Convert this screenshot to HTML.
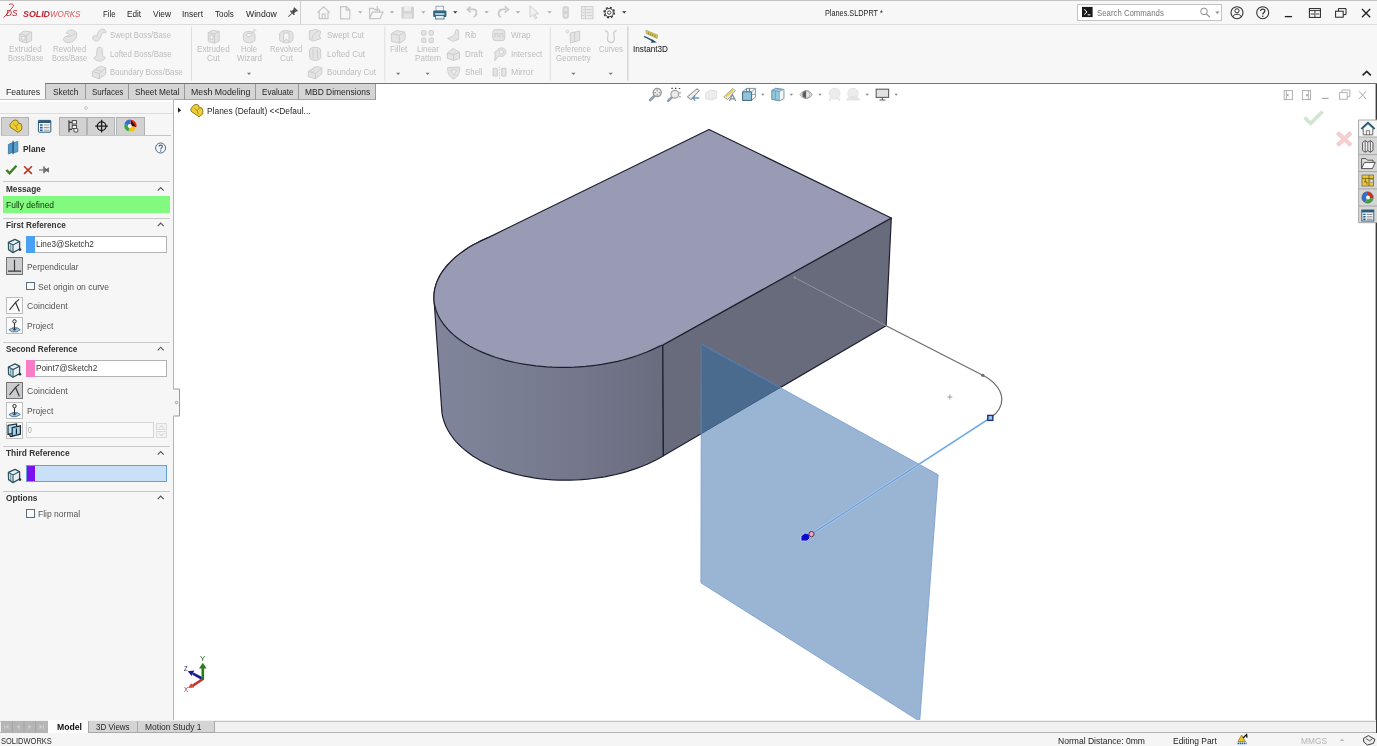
<!DOCTYPE html>
<html>
<head>
<meta charset="utf-8">
<title>Planes.SLDPRT</title>
<style>
html,body{margin:0;padding:0;}
body{width:1377px;height:746px;overflow:hidden;background:#fff;position:relative;font-family:"Liberation Sans",sans-serif;font-size:9px;color:#222;}
.abs{position:absolute;}
.t{position:absolute;white-space:nowrap;line-height:12px;font-size:8.8px;transform-origin:0 50%;}
#titlebar{left:0;top:0;width:1377px;height:24px;background:#f7f7f7;border-top:1px solid #c4c4c4;box-sizing:border-box;}
#ribbon{left:0;top:24px;width:1377px;height:60px;background:#f7f7f7;border-top:1px solid #dcdcdc;box-sizing:border-box;}
.menu{top:8px;font-size:9px;color:#1a1a1a;}
.dis{color:#b4b4b4;}
.rl{font-size:8.3px;color:#b9b9b9;line-height:9.5px;text-align:center;}
.vsep{position:absolute;width:1px;background:#dedede;}
.ts{position:absolute;top:84px;height:15.5px;width:1px;background:#9a9a9a;}
.tab{position:absolute;top:83px;height:16px;box-sizing:border-box;background:#d4d4d4;border:1px solid #9c9c9c;border-left:none;font-size:9.3px;color:#2a2a2a;text-align:center;line-height:15px;white-space:nowrap;}
.tab.first{border-left:1px solid #9c9c9c;}
.tab.act{background:#f7f7f7;border:none;color:#222;}
#left{left:0;top:99.5px;width:173px;height:620.5px;background:#f6f6f6;border-right:1px solid #b5b5b5;}
.sec{position:absolute;left:0;width:173px;font-weight:bold;font-size:8.6px;color:#333;}
.hl{position:absolute;left:3px;width:167px;height:1px;background:#c9c9c9;}
.lbl{font-size:8.6px;color:#444;}
.ibox{position:absolute;box-sizing:border-box;border:1px solid #9a9a9a;background:#fafafa;}
.pt{position:absolute;top:117.3px;height:17.7px;box-sizing:border-box;background:#d2d2d2;border:1px solid #b2b2b2;border-bottom:none;}
.bt{position:absolute;left:6.1px;width:16.9px;height:17.2px;box-sizing:border-box;background:#fbfbfb;border:1px solid #bdbdbd;}
.bt.on{background:#cacdd0;border-color:#747474;}
.cb{position:absolute;left:26.1px;width:8.7px;height:8.6px;box-sizing:border-box;background:#fbfbfb;border:1px solid #5b6d86;}
.chev{position:absolute;}
#bottomtabs{left:0;top:719px;width:1377px;height:14px;background:#f0f0f0;border-top:1px solid #c8c8c8;box-sizing:border-box;}
#status{left:0;top:733px;width:1377px;height:13px;background:#f5f5f5;border-top:1px solid #c2c2c2;box-sizing:border-box;}
</style>
</head>
<body>
<!--TITLEBAR-->
<div id="titlebar" class="abs"></div>
<!--RIBBON-->
<div id="ribbon" class="abs"></div>
<!--TOPI-->
<svg class="abs" style="left:0;top:0" width="1377" height="100" viewBox="0 0 1377 100">
<defs>
<g id="dd"><path d="M-2.1,-1 H2.1 L0,1.3 Z"/></g>
<g id="cube"><path d="M0,3.4 L5,1 L12,2.6 V10.4 L6.6,13 L0,11 Z" fill="#e2e2e2" stroke="#c9c9c9" stroke-width="0.9"/><path d="M0,3.4 L6.6,5.2 L12,2.6 M6.6,5.2 V13" fill="none" stroke="#c9c9c9" stroke-width="0.9"/></g>
</defs>
<!-- DS logo swoosh -->
<path d="M9.4,4.4 C12.6,3.2 14.6,4.6 12.8,7 C11,9.2 6.6,14.4 4,17.4" fill="none" stroke="#c4232d" stroke-width="0.9" stroke-linecap="round"/>
<!-- pin -->
<g transform="translate(292.3,12.8) rotate(45)" fill="#4a4a4a"><rect x="-2.6" y="-5.4" width="5.2" height="1.4"/><rect x="-1.7" y="-4.2" width="3.4" height="3.6"/><path d="M-3.2,-0.8 H3.2 L2.4,0.6 H-2.4 Z"/><rect x="-0.45" y="0.6" width="0.9" height="5"/></g>
<!-- separators -->
<rect x="300" y="1" width="1" height="23.5" fill="#cfcfcf"/>
<rect x="191" y="26.5" width="1" height="54" fill="#dedede"/><rect x="384.3" y="26.5" width="1" height="54" fill="#dedede"/><rect x="549.8" y="26.5" width="1" height="54" fill="#dedede"/><rect x="627.3" y="26.5" width="1.2" height="54" fill="#cdcdcd"/>
<!-- quick access (disabled grey) -->
<g fill="none" stroke="#c6c6c6" stroke-width="1.2">
<path d="M317.4,12.6 L323.6,6.8 L329.8,12.6 M319.2,11.4 V18.6 H328 V11.4 M322.2,18.4 V14.2 H325 V18.4"/>
<path d="M340.6,6.6 H346.4 L349.8,10 V18.8 H340.6 Z M346.2,6.8 V10.2 H349.6"/>
<path d="M369.6,18.6 V8.4 H373.4 L374.6,10 H379.6 V12 M369.6,18.6 L372.4,12.2 H383 L380,18.6 Z M377.2,6 V10.4 M375.4,8.6 L377.2,10.6 L379,8.6"/>
</g>
<rect x="401.4" y="6.8" width="12.6" height="12" rx="1" fill="#d2d2d2"/><rect x="404" y="6.8" width="7" height="4.4" fill="#ececec"/><rect x="403.6" y="13.4" width="8.2" height="5.4" fill="#e4e4e4"/>
<g fill="#a9a9a9"><use href="#dd" x="360.2" y="12.2"/><use href="#dd" x="392" y="12.2"/><use href="#dd" x="423.4" y="12.2"/><use href="#dd" x="486.6" y="12.2"/><use href="#dd" x="518" y="12.2"/><use href="#dd" x="549.6" y="12.2"/></g>
<g fill="#333"><use href="#dd" x="455.2" y="12.2"/><use href="#dd" x="624.2" y="12.2"/></g>
<!-- print -->
<rect x="436" y="6.2" width="7.6" height="5" fill="#f4f4f4" stroke="#8a9aa6" stroke-width="0.8"/>
<rect x="433.2" y="10.6" width="13.2" height="6.4" rx="1" fill="#2f6482"/><rect x="435.2" y="13.2" width="9.2" height="1.6" fill="#cfe0ea"/><rect x="435.6" y="15.6" width="8.4" height="3.4" fill="#e9eef2" stroke="#2f6482" stroke-width="0.8"/>
<!-- undo redo cursor -->
<g fill="none" stroke="#c9c9c9" stroke-width="1.7"><path d="M468.6,9.4 H473.4 C477.4,9.4 477.6,15.4 473.6,17 M470.6,6.6 L467.4,9.4 L470.6,12.4"/><path d="M506,9.4 H502.6 C498,9.4 497.4,15.4 500.8,17.2 M504.8,6.4 L508.4,9.4 L504.8,12.6"/></g>
<path d="M530,5.8 V17.2 L533,14.6 L535.2,18.8 L536.8,18 L534.8,14 L538.6,13.6 Z" fill="#f2f2f2" stroke="#c9c9c9" stroke-width="0.9"/>
<rect x="562.4" y="6" width="6.6" height="13" rx="3.2" fill="#d4d4d4"/><circle cx="565.7" cy="9.6" r="1.5" fill="#e8e8e8"/><circle cx="565.7" cy="15.2" r="1.5" fill="#e8e8e8"/>
<rect x="581.4" y="6.6" width="11.6" height="12.2" fill="#ececec" stroke="#cdcdcd" stroke-width="0.9"/><path d="M585.4,6.6 V18.8 M582.6,9.6 h1.8 M582.6,12.6 h1.8 M582.6,15.6 h1.8 M586.8,9.6 h5 M586.8,12.6 h5 M586.8,15.6 h5" stroke="#cdcdcd" stroke-width="0.9"/>
<!-- gear -->
<g transform="translate(609.2,12.6)"><circle r="5.1" fill="none" stroke="#3a3a3a" stroke-width="1.6" stroke-dasharray="2 2.005"/><circle r="4.1" fill="#f7f7f7" stroke="#3a3a3a" stroke-width="1"/><circle r="1.7" fill="none" stroke="#3a3a3a" stroke-width="0.9"/></g>
<!-- search box -->
<rect x="1077.5" y="4.5" width="144" height="16" fill="#fff" stroke="#c4c4c4" stroke-width="1"/>
<rect x="1082" y="6.9" width="10.6" height="10.2" fill="#1a1a1a"/><path d="M1084.2,9.4 L1087,12 L1084.2,14.6 M1087.6,14.8 H1090.4" fill="none" stroke="#fff" stroke-width="1"/>
<circle cx="1204" cy="11.4" r="3.3" fill="none" stroke="#8a8a8a" stroke-width="1"/><path d="M1206.4,13.8 L1209.8,17.2" stroke="#8a8a8a" stroke-width="1.2"/>
<use href="#dd" x="1217.4" y="12.6" fill="#8a8a8a"/>
<!-- user / help -->
<circle cx="1237" cy="12.7" r="6" fill="none" stroke="#333" stroke-width="1.1"/><circle cx="1237" cy="10.8" r="2.1" fill="none" stroke="#333" stroke-width="1"/><path d="M1232.8,16.8 C1233.6,13.4 1240.4,13.4 1241.2,16.8" fill="none" stroke="#333" stroke-width="1"/>
<circle cx="1262.7" cy="12.7" r="6" fill="none" stroke="#333" stroke-width="1.1"/><path d="M1260.6,11 C1260.6,8.4 1264.9,8.4 1264.9,11 C1264.9,12.6 1262.8,12.6 1262.8,14.4" fill="none" stroke="#333" stroke-width="1.2"/><circle cx="1262.8" cy="16.2" r="0.8" fill="#333"/>
<!-- window controls -->
<path d="M1284.8,16.6 H1292" stroke="#222" stroke-width="1.3"/>
<rect x="1309.4" y="8.6" width="11" height="8.8" fill="none" stroke="#222" stroke-width="1"/><path d="M1309.4,10.6 H1320.4 M1314.9,10.6 V17.4 M1310.6,14 h3.4 M1319.2,14 h-3.4" stroke="#222" stroke-width="0.9"/>
<path d="M1338.4,11 V8.6 H1346 V14.6 H1343.4" fill="none" stroke="#222" stroke-width="1"/><rect x="1335.6" y="11.2" width="7.6" height="6" fill="#f7f7f7" stroke="#222" stroke-width="1"/>
<path d="M1362,9 L1370.2,17.2 M1370.2,9 L1362,17.2" stroke="#222" stroke-width="1.3"/>
<path d="M1362.6,75.4 L1366.7,71.4 L1370.8,75.4" fill="none" stroke="#222" stroke-width="1.5"/>
<!-- ribbon dropdown arrows -->
<g fill="#7a7a7a"><use href="#dd" x="249" y="73.8"/><use href="#dd" x="398.2" y="73.8"/><use href="#dd" x="427.6" y="73.8"/><use href="#dd" x="573.4" y="73.8"/><use href="#dd" x="610.7" y="73.8"/></g>
<g fill="#e4e4e4" stroke="#cbcbcb" stroke-width="0.9" stroke-linejoin="round">
<!-- extruded boss -->
<path d="M19.4,34 L24,31 L31.6,32 V40.4 L26.6,43 L19.4,41 Z"/><path d="M19.4,34 L26.6,35.4 L31.6,32 M26.6,35.4 V43" fill="none"/><rect x="21.6" y="36.4" width="3.4" height="3.6" fill="#f2f2f2"/>
<!-- revolved boss -->
<path d="M66,33 C68,28.6 76.6,29 76.8,34.4 C77,39.6 71.6,43.6 66.4,42.4 C62.6,41.4 62.6,37 66,36.4 C69.2,35.8 70.6,34 66,33 Z"/><path d="M66,36.4 C69,37.6 73.4,35.4 75.6,32.6" fill="none"/>
<!-- swept boss -->
<path d="M92.6,37.6 C92.6,35.4 95.2,35 96.6,36.4 C97.8,32.6 99,29.2 102.6,29.2 C105.4,29.2 106.6,31.4 105.6,33 C104.2,32 102.2,32.6 101.4,35.2 C100.2,39.2 98.4,41.4 95.6,41 C93.6,40.6 92.6,39.2 92.6,37.6 Z"/>
<!-- lofted boss -->
<path d="M97.2,48.4 C97.2,46.8 102,46.8 102,48.4 L102.6,55.4 L105.4,57.8 C104.4,60.4 100.6,61.4 99.6,61.2 C97.6,61 94.4,59.8 93.8,57.8 L96.6,55.4 Z"/>
<!-- boundary boss -->
<path d="M92.4,71.6 L98,67.2 L101.4,66.4 L105.8,68 V74 L99.4,78.8 L92.4,76.4 Z"/><path d="M92.4,71.6 L99.4,73.6 L105.8,68 M99.4,73.6 V78.8 M95.4,69.4 L101.8,71.4" fill="none"/>
<!-- extruded cut -->
<path d="M208.2,32.6 L212.6,30.4 L219.2,31.4 V41 L214.6,43.2 L208.2,41.6 Z"/><path d="M208.2,32.6 L214.6,34 L219.2,31.4 M214.6,34 V43.2" fill="none"/><rect x="210" y="35" width="3" height="4.4" fill="#f4f4f4"/>
<!-- hole wizard -->
<path d="M243.4,34.6 C243.4,30.4 255,30.4 255,34.6 V39.6 C255,43.8 243.4,43.8 243.4,39.6 Z"/><ellipse cx="249.2" cy="35" rx="3" ry="1.6" fill="#f4f4f4"/><path d="M250.6,34 L255.4,29.6 M253.4,29 L256,31.6" fill="none"/>
<!-- revolved cut -->
<path d="M279.6,34 C279.6,29.4 293,29.4 293,34 V39.4 C293,44 279.6,44 279.6,39.4 Z"/><path d="M283.6,33 H289 V41.4 L286.4,39 L283.6,41.4 Z" fill="#f4f4f4"/>
<!-- swept cut -->
<path d="M309.4,31 L316,29.4 L320.8,31.4 L319.4,36.4 L321,38.4 L314,41 L309.4,39.6 Z"/><path d="M312,39.6 C312,36 314,32.6 318.4,31.4" fill="none"/>
<!-- lofted cut -->
<path d="M309.6,50 C309.6,46.4 320.6,46.4 320.6,50 V57.4 C320.6,61.4 309.6,61.4 309.6,57.4 Z"/><path d="M313,49.4 V58.6 M317.4,49.4 V58.6" fill="none"/>
<!-- boundary cut -->
<path d="M308.4,71.4 L314,67.4 L317.4,66.6 L321.8,68 V74 L315.4,78.8 L308.4,76.6 Z"/><path d="M308.4,71.4 L315.4,73.6 L321.8,68 M315.4,73.6 V78.8" fill="none"/><circle cx="312.6" cy="70.6" r="1.2" fill="#f4f4f4"/>
<!-- fillet -->
<path d="M391.4,33.6 L396.6,30.6 L404.6,32 C405.4,34 405.4,38 404.6,40 L399.4,43.2 L391.4,41.4 Z"/><path d="M391.4,33.6 L399.4,35.4 L404.6,32 M399.4,35.4 V43.2" fill="none"/>
<!-- linear pattern -->
<rect x="421.6" y="30.6" width="4.4" height="4.6" rx="1"/><rect x="429" y="30.6" width="4.4" height="4.6" rx="1"/><rect x="421.6" y="38" width="4.4" height="4.6" rx="1"/><rect x="429" y="38" width="4.4" height="4.6" rx="1"/>
<!-- rib draft shell -->
<path d="M447.6,38.4 L452,36.6 C455,35.4 455.6,31.4 456,29.6 L458.6,30.4 V39.4 L452.6,41.4 Z"/>
<path d="M447.4,53 L453,48.4 L459.6,52.4 V58.6 L453.6,60.4 L447.4,58.4 Z"/><path d="M447.4,53 L453.6,54.6 L459.6,52.4 M453.6,54.6 V60.4" fill="none"/>
<path d="M447.6,67.6 L459.6,67 C460,73 457.4,77.4 453.4,79 C449.6,77.4 447.4,73 447.6,67.6 Z"/><path d="M451,70 L456.6,70 L454,75.6 Z" fill="#f4f4f4"/>
<!-- wrap intersect mirror -->
<rect x="492.8" y="29.6" width="12" height="11" rx="2.6"/><path d="M495,37.4 V33.6 H498 V37.4 M500,37.4 V33.6 H503 V37.4" fill="none"/>
<path d="M497,50.6 C499,46.4 506,47.4 506,52 C506,56 501,57.4 498.6,56 L494.6,61 L495.4,55 C493.6,53.4 495,51 497,50.6 Z"/><circle cx="501.4" cy="52" r="2.2" fill="#f4f4f4"/>
<path d="M493,68.4 H497.4 V76 H493 Z M501.6,68.4 H506 V76 H501.6 Z"/><path d="M499.5,66.4 V79" fill="none" stroke-dasharray="1.6 1.2"/>
<!-- ref geometry -->
<path d="M570.4,33 L579.6,31 V40.4 L570.4,43 Z"/><circle cx="567.4" cy="31.6" r="1.3" fill="none"/><path d="M574.6,32 V42" fill="none"/>
<!-- curves -->
<path d="M605,30.6 C611,31 606,38.4 608,41 C610,43.4 613,43 614,40.6 C615.6,37 611,31.6 616.6,30.4" fill="none" stroke-width="1.2"/>
</g>
<!-- instant3D -->
<path d="M645.9,30.2 L657.6,35 L657.2,38.5 L646.1,33.4 Z" fill="#d6c556" stroke="#a8983a" stroke-width="0.6"/>
<path d="M648.4,32.4 v1.8 M650.6,33.3 v1.8 M652.8,34.2 v1.8 M655,35.2 v1.8" stroke="#7d6f24" stroke-width="0.7"/>
<path d="M644.1,36.3 L653.4,41" stroke="#2d5f76" stroke-width="1.5"/><path d="M652.3,39.4 L657,42.6 L650.8,42.7 Z" fill="#264f66"/>
</svg>
<!--/TOPI-->
<!--TABS-->
<div class="abs" style="left:45px;top:82.8px;width:1332px;height:1.3px;background:#757575"></div>
<div class="abs" style="left:0;top:84px;width:45px;height:15.5px;background:#f7f7f7"></div>
<div class="abs" style="left:45px;top:84px;width:331px;height:15.5px;background:#d5d5d5;border-bottom:1px solid #a6a6a6;box-sizing:border-box"></div>
<div class="ts" style="left:45px"></div><div class="ts" style="left:85px"></div><div class="ts" style="left:127.8px"></div><div class="ts" style="left:184.2px"></div><div class="ts" style="left:255px"></div><div class="ts" style="left:298.1px"></div><div class="ts" style="left:375.3px"></div>
<!--/TABS-->
<!--LEFT-->
<div id="left" class="abs"></div>
<!--LEFTC-->
<div class="abs" style="left:0;top:99.4px;width:173.5px;height:1px;background:#c4c4c4"></div><div class="abs" style="left:0;top:100.4px;width:173px;height:1.2px;background:#fdfdfd"></div>
<div class="abs" style="left:0;top:113px;width:173px;height:1px;background:#dedede"></div>
<svg class="abs" style="left:83px;top:105px" width="6" height="6"><circle cx="3" cy="3" r="1.4" fill="none" stroke="#b5b5b5" stroke-width="0.7"/></svg>
<div class="abs" style="left:1px;top:135px;width:170px;height:1px;background:#c4c4c4"></div>
<div class="pt" style="left:1.2px;width:28.1px"></div>
<div class="pt" style="left:29.3px;width:29.3px;background:#f3f3f3;height:18.6px;border-color:#f3f3f3"></div>
<div class="pt" style="left:58.6px;width:28.8px"></div>
<div class="pt" style="left:87.4px;width:28.1px"></div>
<div class="pt" style="left:115.5px;width:29.2px"></div>
<!-- section lines -->
<div class="hl" style="top:181px"></div>
<div class="hl" style="top:217.5px"></div>
<div class="hl" style="top:341.7px"></div>
<div class="hl" style="top:446px"></div>
<div class="hl" style="top:490.7px"></div>
<!-- message -->
<div class="abs" style="left:3px;top:196px;width:167px;height:16.7px;background:#82fa7f"></div>
<!-- inputs -->
<div class="ibox" style="left:26.1px;top:236.1px;width:140.9px;height:16.6px;background:#fff;border-color:#b2b2b2"><div style="position:absolute;left:-1px;top:-1px;width:9.2px;height:16.6px;background:#4aa0f2"></div></div>
<div class="ibox" style="left:26.1px;top:360.3px;width:140.9px;height:17px;background:#fff;border-color:#b2b2b2"><div style="position:absolute;left:-1px;top:-1px;width:9.2px;height:17px;background:#f87cc6"></div></div>
<div class="ibox" style="left:26.1px;top:464.9px;width:140.9px;height:16.9px;background:#c9e1f8;border-color:#5fa2d8"><div style="position:absolute;left:0;top:0;width:8.2px;height:100%;background:#7a12f0"></div></div>
<div class="ibox" style="left:26.1px;top:422px;width:127.6px;height:16.2px;background:#f9f9f9;border-color:#d6d6d6"></div>
<div class="ibox" style="left:156px;top:423px;width:11px;height:7px;background:#f2f2f2;border-color:#dcdcdc"></div>
<div class="ibox" style="left:156px;top:431px;width:11px;height:7px;background:#f2f2f2;border-color:#dcdcdc"></div>
<!-- buttons -->
<div class="bt on" style="top:257.4px"></div>
<div class="bt" style="top:296.6px"></div>
<div class="bt" style="top:316.8px"></div>
<div class="bt on" style="top:381.7px"></div>
<div class="bt" style="top:401.6px"></div>
<div class="bt" style="top:421.6px"></div>
<!-- checkboxes -->
<div class="cb" style="top:281.8px"></div>
<div class="cb" style="top:509.1px"></div>
<!-- splitter handle -->
<svg class="abs" style="left:170px;top:386px" width="12" height="34"><path d="M3.5,3 H9.5 V30 H3.5" fill="#f6f6f6" stroke="#9a9a9a" stroke-width="1"/><rect x="2.6" y="3.6" width="1.6" height="25.8" fill="#f6f6f6"/><circle cx="6.5" cy="16.5" r="1.3" fill="none" stroke="#8a8a8a" stroke-width="0.7"/></svg>
<!--LI-->
<svg class="abs" style="left:0;top:100px" width="182" height="440" viewBox="0 100 182 440">
<defs>
<g id="part"><path d="M0.1,4.4 L3.1,0.8 L5.4,0 L7.6,0.6 L8.6,3.2 L11,3.6 L12.1,6.2 L11.9,9.6 L8.2,12.4 L0.4,7 Z" fill="#f1cd35" stroke="#8c7a1c" stroke-width="1" stroke-linejoin="round"/><path d="M3.4,3.8 L6.4,6.4 L8.8,3.4 M6.4,6.4 L7.6,10" fill="none" stroke="#a58d22" stroke-width="0.9"/></g>
<g id="chev"><path d="M-3,1.6 L0,-1.5 L3,1.6" fill="none" stroke="#555" stroke-width="1.1"/></g>
<g id="selcube"><path d="M0.8,4 L7.4,0.9 L12,3.2 V10.6 L5.4,14.2 L1,11.2 Z" fill="#e9f0f4" stroke="#2f5560" stroke-width="1.3" stroke-linejoin="round"/><path d="M0.8,4 L5.4,6.6 L12,3.2 M5.4,6.6 V14.2" fill="none" stroke="#2f5560" stroke-width="1.1"/><path d="M3.2,5.6 V12.6" stroke="#4a7a88" stroke-width="0.9"/><circle cx="12.4" cy="11.2" r="1.3" fill="#25343c"/></g>
<g id="coinc"><path d="M-4.6,4 L1.2,-3.2 L4.8,5.4 M1.2,-3.2 L4.4,-6" fill="none" stroke="#3a3a3a" stroke-width="1.2" stroke-linecap="round"/></g>
<g id="proj"><path d="M-5.6,4.2 L-2,2.2 H3 L5.8,4.2 L2,6.2 H-2.6 Z" fill="#9cc7e6" stroke="#3a6f95" stroke-width="0.8"/><path d="M0,-2.6 V4.4" stroke="#333" stroke-width="1.1"/><circle cx="0" cy="-4.3" r="1.7" fill="#f2f2f2" stroke="#333" stroke-width="1"/><path d="M-1.8,2.8 L0,4.8 L1.8,2.8" fill="none" stroke="#333" stroke-width="0.9"/></g>
</defs>
<!-- panel tab icons -->
<use href="#part" x="9.8" y="120"/>
<rect x="38.4" y="120.4" width="12.4" height="11.8" rx="0.8" fill="#f4f6f8" stroke="#2b5b7a" stroke-width="1"/>
<rect x="38.4" y="120.4" width="12.4" height="2.6" fill="#2b5b7a"/>
<path d="M40,125 h2.6 M40,127.6 h2.6 M40,130.2 h2.6" stroke="#1f5f94" stroke-width="1.6"/>
<path d="M43.8,125 h5.6 M43.8,127.6 h5.6 M43.8,130.2 h5.6" stroke="#9a9a9a" stroke-width="1.1"/>
<path d="M69,120.2 V132.2 M69,122.4 H72 M69,129.4 H72" fill="none" stroke="#3a3a3a" stroke-width="1.2"/>
<rect x="72.2" y="120.6" width="4.2" height="3.4" fill="#f5f5f5" stroke="#3a3a3a" stroke-width="0.9"/>
<rect x="72.2" y="125.4" width="4.2" height="3.2" fill="#f5f5f5" stroke="#3a3a3a" stroke-width="0.9"/>
<rect x="74" y="128.6" width="3.8" height="3.4" rx="0.8" fill="#fff" stroke="#3a3a3a" stroke-width="0.9"/>
<circle cx="101.6" cy="126.2" r="4.3" fill="none" stroke="#1c1c1c" stroke-width="1.3"/>
<path d="M95.2,126.2 H108 M101.6,119.8 V132.6" stroke="#1c1c1c" stroke-width="1.3"/>
<g transform="translate(130.4,125.6)"><circle r="6.2" fill="#fff"/>
<path d="M0,0 L0,-6.2 A6.2,6.2 0 0 1 5.9,2 Z" fill="#d8281c"/>
<path d="M0,0 L5.9,2 A6.2,6.2 0 0 1 -2,5.9 Z" fill="#f2c21a"/>
<path d="M0,0 L-2,5.9 A6.2,6.2 0 0 1 -6.1,-1 Z" fill="#3aa63a"/>
<path d="M0,0 L-6.1,-1 A6.2,6.2 0 0 1 0,-6.2 Z" fill="#2f6fd0"/>
<path d="M0.4,-5.6 L5.4,1 L0.8,0.4 Z" fill="#1a1a1a"/>
<circle r="2.1" cx="-0.6" cy="0.4" fill="#f4f4f4"/></g>
<!-- plane icon -->
<path d="M8.4,144.4 L12.6,142.6 V152.4 L8.4,154 Z" fill="#4e97c6" stroke="#2d6a94" stroke-width="0.7"/>
<path d="M13.6,142.8 L17.8,141.4 V151.6 L13.6,152.8 Z" fill="#5aa3d0" stroke="#2d6a94" stroke-width="0.7"/>
<path d="M13.1,140.8 V154.2" stroke="#1f4f74" stroke-width="1.1"/>
<!-- help -->
<circle cx="160.6" cy="148" r="5" fill="#f7f7f7" stroke="#4a6c8c" stroke-width="1"/>
<path d="M158.9,146.6 C158.9,144.6 162.4,144.6 162.4,146.6 C162.4,147.9 160.7,147.9 160.7,149.4" fill="none" stroke="#3a5c7c" stroke-width="1.1"/><circle cx="160.7" cy="151" r="0.7" fill="#3a5c7c"/>
<!-- ok cancel pin -->
<path d="M6.4,170 L9.6,173.2 L16.4,165.8" fill="none" stroke="#3a7f24" stroke-width="2.4"/>
<path d="M24.1,166.2 L31.9,173.9 M31.9,166.2 L24.1,173.9" stroke="#b8331a" stroke-width="1.5"/>
<path d="M39,170 H43.6" stroke="#666" stroke-width="1.1"/><rect x="43.2" y="166.4" width="1.5" height="6.8" fill="#666"/><path d="M44.6,167.6 L46.6,169 L48.9,167.3 V172.7 L46.6,171 L44.6,172.4 Z" fill="#666"/>
<!-- chevrons -->
<use href="#chev" x="160.7" y="189"/><use href="#chev" x="160.7" y="224.6"/><use href="#chev" x="160.7" y="348.7"/><use href="#chev" x="160.7" y="453.1"/><use href="#chev" x="160.7" y="497.6"/>
<!-- select cubes -->
<use href="#selcube" x="7.6" y="238.4"/><use href="#selcube" x="7.6" y="363"/><use href="#selcube" x="7.6" y="468.4"/>
<!-- perpendicular -->
<path d="M14.5,259.8 V271.2 M8,271.2 H21.2" stroke="#3a3a3a" stroke-width="1.2"/>
<use href="#coinc" x="14.4" y="305.6"/><use href="#coinc" x="14.4" y="390.6"/>
<use href="#proj" x="14.5" y="325.6"/><use href="#proj" x="14.5" y="410.4"/>
<!-- offset icon -->
<path d="M8,425.4 L16.6,424 V432.6 L8,434.4 Z" fill="#b4def2" stroke="#1f2d38" stroke-width="1.2"/>
<path d="M12.2,427.6 L20.4,425.8 V434.2 L12.2,436.2 Z" fill="#9fd3ee" stroke="#1f2d38" stroke-width="1.2"/>
<path d="M16.4,428.6 V434 M10,434.4 V436.6 M10,436.4 H12.4" stroke="#10181e" stroke-width="1.1" fill="none"/>
<!-- spinner arrows -->
<path d="M159.4,427.8 L161.5,425.4 L163.6,427.8 M159.4,433.4 L161.5,435.8 L163.6,433.4" fill="none" stroke="#c6c6c6" stroke-width="0.8"/>
</svg>
<!--/LI-->
<!--/LEFTC-->
<!--VIEWPORT-->
<svg class="abs" style="left:0;top:0" width="1377" height="746" viewBox="0 0 1377 746">
<defs><linearGradient id="cg" gradientUnits="userSpaceOnUse" x1="434" y1="0" x2="663" y2="0"><stop offset="0" stop-color="#81859b"/><stop offset="0.35" stop-color="#7a7e93"/><stop offset="0.65" stop-color="#74778b"/><stop offset="0.85" stop-color="#6e7184"/><stop offset="1" stop-color="#696c7d"/></linearGradient></defs>
<polygon points="433.9,297.8 434.0,294.8 434.3,291.8 434.8,288.8 435.6,285.8 436.6,282.8 437.8,279.8 439.2,276.9 440.8,274.0 442.7,271.1 444.8,268.3 447.1,265.5 449.6,262.8 452.3,260.1 455.2,257.4 458.3,254.9 461.6,252.4 465.0,250.0 468.6,247.6 472.4,245.3 476.4,243.2 480.5,241.1 484.8,239.1 489.2,237.2 662.8,345.0 663.4,455.8 661.0,457.3 656.5,459.7 651.9,462.0 647.2,464.2 642.2,466.2 637.2,468.1 632.0,469.9 626.8,471.6 621.4,473.1 615.9,474.5 610.3,475.7 604.7,476.8 599.0,477.7 593.2,478.5 587.4,479.2 581.6,479.6 575.8,480.0 569.9,480.2 564.1,480.2 558.3,480.1 552.5,479.8 546.7,479.4 541.0,478.8 535.4,478.1 529.9,477.2 524.4,476.2 519.0,475.0 513.7,473.7 508.6,472.2 503.6,470.6 498.7,468.9 493.9,467.0 489.4,465.0 484.9,462.9 480.7,460.7 476.6,458.3 472.8,455.9 469.1,453.3 465.6,450.6 462.4,447.9 459.3,445.0 456.5,442.1 453.9,439.1 451.6,436.0 449.5,432.8 447.6,429.6 446.0,426.4 444.6,423.0 443.5,419.7 442.6,416.3 442.0,412.9 441.7,409.4 434.1,300.8" fill="url(#cg)" stroke="#1d2030" stroke-width="1.2" stroke-linejoin="round"/>
<polygon points="662.8,345.0 891.3,218.0 886.1,325.8 663.4,455.8" fill="#686b7b" stroke="#1d2030" stroke-width="1.2" stroke-linejoin="round"/>
<polygon points="709.0,129.5 891.3,218.0 662.8,345.0 659.7,346.1 655.5,348.1 651.2,350.1 646.8,352.0 642.2,353.8 637.5,355.5 632.7,357.1 627.8,358.6 622.8,360.0 617.6,361.3 612.4,362.4 607.2,363.4 601.8,364.4 596.4,365.2 591.0,365.8 585.5,366.4 580.0,366.8 574.4,367.2 568.9,367.3 563.3,367.4 557.8,367.3 552.3,367.2 546.8,366.9 541.3,366.4 535.9,365.9 530.6,365.2 525.3,364.4 520.1,363.5 514.9,362.5 509.9,361.3 504.9,360.1 500.1,358.7 495.4,357.2 490.8,355.6 486.3,353.9 482.0,352.1 477.8,350.2 473.8,348.3 469.9,346.2 466.2,344.0 462.7,341.8 459.4,339.4 456.2,337.0 453.3,334.6 450.5,332.0 447.9,329.4 445.6,326.7 443.4,324.0 441.5,321.2 439.7,318.4 438.2,315.5 436.9,312.6 435.9,309.7 435.0,306.8 434.4,303.8 434.0,300.8 433.9,297.8 434.0,294.8 434.3,291.8 434.8,288.8 435.6,285.8 436.5,282.8 437.8,279.8 439.2,276.9 440.8,274.0 442.7,271.1 444.8,268.3 447.1,265.5 449.6,262.8 452.3,260.1 455.2,257.4 458.3,254.9 461.5,252.4 465.0,250.0 468.6,247.6 472.4,245.3 476.4,243.2 480.5,241.1 484.8,239.1 489.2,237.1 709.0,129.5" fill="#989bb3" stroke="#1d2030" stroke-width="1.2" stroke-linejoin="round"/>
<line x1="794.7" y1="277.5" x2="886.1" y2="325.8" stroke="#8f9098" stroke-width="1"/>
<circle cx="794.7" cy="277.5" r="1.3" fill="#8f9098"/>
<path d="M886.1,325.8 L982.8,375.3 C993,380.5 1001.5,389 1001.8,399 C1002,407 997.5,413 990.8,417.5" fill="none" stroke="#6b6b6b" stroke-width="1.2"/>
<circle cx="982.8" cy="375.3" r="1.6" fill="#6b6b6b"/>
<path d="M947.4,397 h5 M949.9,394.5 v5" stroke="#8a8a8a" stroke-width="0.8" fill="none"/>
<clipPath id="sc"><polygon points="433.9,297.8 434.0,294.8 434.3,291.8 434.8,288.8 435.6,285.8 436.6,282.8 437.8,279.8 439.2,276.9 440.8,274.0 442.7,271.1 444.8,268.3 447.1,265.5 449.6,262.8 452.3,260.1 455.2,257.4 458.3,254.9 461.6,252.4 465.0,250.0 468.6,247.6 472.4,245.3 476.4,243.2 480.5,241.1 484.8,239.1 489.2,237.2 662.8,345.0 663.4,455.8 661.0,457.3 656.5,459.7 651.9,462.0 647.2,464.2 642.2,466.2 637.2,468.1 632.0,469.9 626.8,471.6 621.4,473.1 615.9,474.5 610.3,475.7 604.7,476.8 599.0,477.7 593.2,478.5 587.4,479.2 581.6,479.6 575.8,480.0 569.9,480.2 564.1,480.2 558.3,480.1 552.5,479.8 546.7,479.4 541.0,478.8 535.4,478.1 529.9,477.2 524.4,476.2 519.0,475.0 513.7,473.7 508.6,472.2 503.6,470.6 498.7,468.9 493.9,467.0 489.4,465.0 484.9,462.9 480.7,460.7 476.6,458.3 472.8,455.9 469.1,453.3 465.6,450.6 462.4,447.9 459.3,445.0 456.5,442.1 453.9,439.1 451.6,436.0 449.5,432.8 447.6,429.6 446.0,426.4 444.6,423.0 443.5,419.7 442.6,416.3 442.0,412.9 441.7,409.4 434.1,300.8"/><polygon points="662.8,345.0 891.3,218.0 886.1,325.8 663.4,455.8"/><polygon points="709.0,129.5 891.3,218.0 662.8,345.0 659.7,346.1 655.5,348.1 651.2,350.1 646.8,352.0 642.2,353.8 637.5,355.5 632.7,357.1 627.8,358.6 622.8,360.0 617.6,361.3 612.4,362.4 607.2,363.4 601.8,364.4 596.4,365.2 591.0,365.8 585.5,366.4 580.0,366.8 574.4,367.2 568.9,367.3 563.3,367.4 557.8,367.3 552.3,367.2 546.8,366.9 541.3,366.4 535.9,365.9 530.6,365.2 525.3,364.4 520.1,363.5 514.9,362.5 509.9,361.3 504.9,360.1 500.1,358.7 495.4,357.2 490.8,355.6 486.3,353.9 482.0,352.1 477.8,350.2 473.8,348.3 469.9,346.2 466.2,344.0 462.7,341.8 459.4,339.4 456.2,337.0 453.3,334.6 450.5,332.0 447.9,329.4 445.6,326.7 443.4,324.0 441.5,321.2 439.7,318.4 438.2,315.5 436.9,312.6 435.9,309.7 435.0,306.8 434.4,303.8 434.0,300.8 433.9,297.8 434.0,294.8 434.3,291.8 434.8,288.8 435.6,285.8 436.5,282.8 437.8,279.8 439.2,276.9 440.8,274.0 442.7,271.1 444.8,268.3 447.1,265.5 449.6,262.8 452.3,260.1 455.2,257.4 458.3,254.9 461.5,252.4 465.0,250.0 468.6,247.6 472.4,245.3 476.4,243.2 480.5,241.1 484.8,239.1 489.2,237.1 709.0,129.5"/></clipPath>
<polygon points="701.4,344.2 938.2,474.8 919.7,721.3 700.9,582.8" fill="#9ab4d4"/>
<polygon points="701.4,344.2 938.2,474.8 919.7,721.3 700.9,582.8" fill="#4b6b8e" clip-path="url(#sc)"/>
<polygon points="701.4,344.2 938.2,474.8 919.7,721.3 700.9,582.8" fill="none" stroke="#7ea3d2" stroke-width="0.9"/>
<polygon points="701.4,344.2 938.2,474.8 919.7,721.3 700.9,582.8" fill="none" stroke="#4672a8" stroke-width="1" clip-path="url(#sc)"/>
<line x1="701.4" y1="433.6" x2="780.1" y2="387.6" stroke="#3c5e86" stroke-width="1"/>
<line x1="990.3" y1="417.9" x2="811.5" y2="534.1" stroke="#d4e8fa" stroke-opacity="0.45" stroke-width="2.6"/>
<line x1="990.3" y1="417.9" x2="811.5" y2="534.1" stroke="#6aa3e2" stroke-width="1.3"/>
<rect x="987.8" y="415.4" width="5" height="5" fill="#9fc0ee" stroke="#17357a" stroke-width="1.4"/>
<path d="M801,536 l4,-3 l4,1 l1,4 l-3,3 l-6,0 z" fill="#0a0ad0" stroke="#c7d3f5" stroke-width="0.8"/>
<circle cx="811.5" cy="534.1" r="2.6" fill="#f4a3c4" stroke="#4a2a3a" stroke-width="0.9"/>
</svg>
<!--/VIEWPORT-->
<!--VC-->
<svg class="abs" style="left:174px;top:84px" width="1203" height="640" viewBox="174 84 1203 640">
<defs><g id="dd2"><path d="M-1.8,-0.9 H1.8 L0,1.1 Z"/></g></defs>
<!-- right border -->
<rect x="1375.6" y="84" width="1.4" height="640" fill="#3c3c3c"/>
<!-- tree item -->
<path d="M178,107.6 L181.2,110.2 L178,112.8 Z" fill="#222"/>
<use href="#part" x="190.8" y="104.4"/>
<!-- heads-up toolbar -->
<g stroke-linecap="round">
<path d="M654.6,95.8 L650,100.2" stroke="#8c9fae" stroke-width="2.6"/><circle cx="657.2" cy="92.6" r="4" fill="#f2f2f2" stroke="#9a9a9a" stroke-width="1.5"/><path d="M657.2,89.8 v1.6 M657.2,93.8 v1.6 M654.4,92.6 h1.6 M658.4,92.6 h1.6" stroke="#9a9a9a" stroke-width="1.3" stroke-linecap="butt"/>
<path d="M671.8,97.4 L668.2,100.8" stroke="#8c9fae" stroke-width="2.6"/><circle cx="674.8" cy="94.2" r="3.9" fill="#e9ecec" stroke="#a4a4a4" stroke-width="1.3"/><path d="M671.4,88.4 h1.4 M675,88.4 h1.4 M678.8,88.5 h1.4" stroke="#3a3a3a" stroke-width="1.2" stroke-linecap="butt"/><path d="M680,92 v1.4 M680,96 v1.4" stroke="#8a8a8a" stroke-width="1.2" stroke-linecap="butt"/>
<path d="M687.4,96.8 L696.8,88.8 L699.2,90.6 L691,99.6 Z" fill="#f1f1f1" stroke="#9c9c9c" stroke-width="1.1" stroke-linejoin="round"/><path d="M692.6,98 H698.8 M694.8,96 L692.4,98 L694.8,100.2" fill="none" stroke="#6a98b8" stroke-width="1.3"/>
</g>
<path d="M705.6,93 L710,90 L716.6,91 V98 L711.6,100.2 L705.6,98.6 Z" fill="#ececec" stroke="#dcdcdc" stroke-width="0.8"/>
<path d="M723.8,96.8 L732.6,88.6 L735.4,90.6 L727.6,99.6 Z" fill="#f0f0f0" stroke="#a2a2a2" stroke-width="1" stroke-linejoin="round"/><path d="M726.6,96 L732.6,90.6" stroke="#ecd04a" stroke-width="2.2" stroke-linecap="round"/><path d="M729.4,101 L732.4,94.6 L735.8,101 M730.6,98.8 h3.8" fill="none" stroke="#7d8f9c" stroke-width="1.2"/>
<path d="M742.6,91.8 L746.4,88.4 H755.4 V97.2 L751.6,100.4 H742.6 Z" fill="#f6f8f9" stroke="#7d8a92" stroke-width="0.9" stroke-linejoin="round"/><path d="M742.6,91.8 H751.6 V100.4 H742.6 Z" fill="#8fc4e0" stroke="#466a80" stroke-width="1"/><path d="M746.6,88.6 V91.6 M749.4,88.6 V91.6" stroke="#466a80" stroke-width="0.9"/><path d="M751.6,94.4 H755.2 M751.6,91.8 L755.4,88.4" fill="none" stroke="#7d8a92" stroke-width="0.8"/>
<path d="M771.8,90.4 L775.6,88.2 L783.8,89.4 V98.6 L779.4,100.8 L771.8,99.4 Z" fill="#93c8e0" stroke="#5f879e" stroke-width="0.9" stroke-linejoin="round"/><path d="M779.4,91.6 L783.8,89.4 V98.6 L779.4,100.8 Z" fill="#f4f7f8" stroke="#8a9aa4" stroke-width="0.7"/><path d="M771.8,90.4 L779.4,91.6 M775.4,91 V100" stroke="#6f98ae" stroke-width="0.7"/>
<path d="M800,94.6 C803,89.4 809.4,89.4 812.2,94.6 C809.4,99.6 803,99.6 800,94.6 Z" fill="#e9e9e9" stroke="#9a9a9a" stroke-width="0.9"/><path d="M806.1,90.8 A3.8,3.8 0 0 0 806.1,98.4 Z" fill="#5c5c5c"/><circle cx="806.1" cy="94.6" r="3.8" fill="none" stroke="#9a9a9a" stroke-width="0.7"/>
<circle cx="834.6" cy="93.6" r="5.4" fill="#ececec" stroke="#dedede" stroke-width="0.8"/><path d="M831,98 L829,101 M838,98 L840,101" stroke="#e0e0e0" stroke-width="1.4"/>
<circle cx="853" cy="93.4" r="5.2" fill="#ececec" stroke="#dedede" stroke-width="0.8"/><path d="M846.4,100 H860 L857,96.8 H849.4 Z" fill="#e6e6e6" stroke="#dcdcdc" stroke-width="0.7"/>
<rect x="876.2" y="89.2" width="12.4" height="8.2" fill="#e2e2e2" stroke="#5e5e5e" stroke-width="1.1"/><path d="M882.4,97.6 V99.8 M879.4,100 H885.4" stroke="#5e5e5e" stroke-width="1.1"/>
<g fill="#8a8a8a"><use href="#dd2" x="762.8" y="94.6"/><use href="#dd2" x="791.3" y="94.6"/><use href="#dd2" x="820" y="94.6"/><use href="#dd2" x="867.2" y="94.6"/><use href="#dd2" x="896.2" y="94.6"/></g>
<!-- mini window controls -->
<g fill="none" stroke="#a9a9a9" stroke-width="0.9">
<rect x="1284.2" y="90.6" width="8.2" height="9"/><path d="M1286.4,90.6 V99.6"/><path d="M1288.4,93.4 L1286.8,95.1 L1288.4,96.8 Z" fill="#8a8a8a" stroke="none"/>
<rect x="1302.4" y="90.6" width="8.2" height="9"/><path d="M1308.4,90.6 V99.6"/><path d="M1306.4,93.4 L1308,95.1 L1306.4,96.8 Z" fill="#8a8a8a" stroke="none"/>
<path d="M1322,98.4 H1328.6" stroke-width="1.2"/>
<path d="M1342,92.4 V90 H1349.8 V96.8 H1347.4"/><rect x="1339.4" y="92.6" width="7.8" height="6.6"/>
<path d="M1359,91.2 L1366.2,99 M1366.2,91.2 L1359,99" stroke-width="1"/>
</g>
<!-- confirm corner -->
<path d="M1304.6,117.4 L1310.6,123.4 L1322.6,111.4" fill="none" stroke="#cfe6cf" stroke-width="3.6"/>
<path d="M1337.4,132.6 L1351,145.4 M1351,132.6 L1337.4,145.4" stroke="#f3cfcf" stroke-width="4.2"/>
<!-- task pane tabs -->
<rect x="1358.6" y="120" width="18.4" height="102.7" fill="#d6d6d6"/><rect x="1358.6" y="120" width="18.4" height="17" fill="#f5f5f5"/>
<path d="M1358.6,120 V222.7 M1358.6,120 H1377 M1358.6,137 H1377 M1358.6,154.6 H1377 M1358.6,171.6 H1377 M1358.6,188.9 H1377 M1358.6,206 H1377 M1358.6,222.7 H1377" fill="none" stroke="#a3a3a3" stroke-width="0.9"/>
<path d="M1361.4,129 L1368,122.8 L1374.6,129" fill="none" stroke="#245877" stroke-width="1.9"/><path d="M1363.2,128.6 V134.8 H1372.8 V128.6" fill="#fafafa" stroke="#555" stroke-width="0.9"/><path d="M1366.4,134.8 V130.6 H1369.6 V134.8" fill="none" stroke="#555" stroke-width="0.8"/>
<path d="M1362.6,142.6 L1365.2,140.6 L1367.8,142.2 L1370.4,140.6 L1373,142.6 V150.4 L1370.4,152.2 L1367.8,150.6 L1365.2,152.2 L1362.6,150.4 Z" fill="#ececec" stroke="#4c4c4c" stroke-width="0.9"/><path d="M1365.2,140.6 V152.2 M1367.8,142.2 V150.6 M1370.4,140.6 V152.2" stroke="#4c4c4c" stroke-width="0.8"/>
<path d="M1361.6,168.6 V158.6 H1366 L1367.4,160.2 H1373 V162.2" fill="#e4e4e4" stroke="#444" stroke-width="0.9"/><path d="M1361.6,168.6 L1364.4,162.4 H1375.2 L1372.4,168.6 Z" fill="#fafafa" stroke="#444" stroke-width="0.9"/>
<rect x="1362" y="175" width="11.4" height="11" fill="#ecc93a" stroke="#6f6a55" stroke-width="0.8"/><path d="M1362,178.4 H1373.4 M1369,175 V186 M1364,182 H1367 V184.6 M1365.4,178.6 V182" fill="none" stroke="#6f5a1a" stroke-width="0.8"/><rect x="1370" y="179.4" width="3" height="3" fill="#e2e2e2" stroke="#777" stroke-width="0.5"/>
<g transform="translate(1367.6,197.4)"><circle r="5.7" fill="#fff"/><path d="M0,0 L-1,-5.6 A5.7,5.7 0 0 1 5.6,1 Z" fill="#d8281c"/><path d="M0,0 L5.6,1 A5.7,5.7 0 0 1 -2.4,5.2 Z" fill="#3aa63a"/><path d="M0,0 L-2.4,5.2 A5.7,5.7 0 0 1 -1,-5.6 Z" fill="#2f6fd0"/><circle r="5.7" fill="none" stroke="#5a5a5a" stroke-width="0.6"/><circle r="2" cx="0.4" cy="0.2" fill="#f2f2f2"/></g>
<rect x="1361.8" y="210" width="12" height="11" fill="#eef2f5" stroke="#2b5b7a" stroke-width="0.9"/><rect x="1361.8" y="210" width="12" height="2.4" fill="#2b5b7a"/><path d="M1363.2,214.4 h2.4 M1363.2,216.8 h2.4 M1363.2,219.2 h2.4" stroke="#1f5f94" stroke-width="1.4"/><path d="M1366.8,214.4 h5.6 M1366.8,216.8 h5.6 M1366.8,219.2 h5.6" stroke="#8a8a8a" stroke-width="1"/>
<!-- triad -->
<g stroke-linecap="butt">
<path d="M202.8,679 L193,673.6" stroke="#1c1c96" stroke-width="2.6"/><path d="M187.8,671.2 L194.4,670.6 L191.6,676 Z" fill="#1c1c96"/>
<path d="M202.8,679 L192.6,685.8" stroke="#c0352c" stroke-width="2.6"/><path d="M188,688 L191.2,683.2 L194.2,687.6 Z" fill="#d0453c"/>
<path d="M202.8,680 V668" stroke="#2a7d1c" stroke-width="2.6"/><path d="M202.8,662.8 L206.6,668.4 H199 Z" fill="#2a7d1c"/>
</g>
</svg>
<!--/VC-->
<!--BOTTOM-->
<!--BT-->
<div class="abs" style="left:0;top:720px;width:1377px;height:13px;background:#f1f1f1"></div>
<div class="abs" style="left:0;top:720.6px;width:1376px;height:1px;background:#c6c6c6"></div>
<div class="abs" style="left:0;top:732px;width:1377px;height:1px;background:#b4b4b4"></div>
<div class="abs" style="left:0;top:733px;width:1377px;height:13px;background:#f5f5f5"></div>
<div class="abs" style="left:1px;top:720.7px;width:46.8px;height:12px;background:#b5b5b5"></div>
<div class="abs" style="left:47.8px;top:720.3px;width:40.2px;height:12.4px;background:#fdfdfd"></div>
<div class="abs" style="left:88px;top:721px;width:49.5px;height:11.7px;background:#d4d4d4;border:1px solid #a8a8a8;border-top:none;box-sizing:border-box"></div>
<div class="abs" style="left:137.5px;top:721px;width:77px;height:11.7px;background:#d4d4d4;border:1px solid #a8a8a8;border-left:none;border-top:none;box-sizing:border-box"></div>
<svg class="abs" style="left:0;top:720px" width="1377" height="26" viewBox="0 720 1377 26">
<path d="M12.4,721 V732.4 M24,721 V732.4 M35.6,721 V732.4" stroke="#a4a4a4" stroke-width="0.9"/>
<g fill="#cdcdcd"><path d="M8.6,724.4 L5.4,726.8 L8.6,729.2 Z"/><rect x="4.2" y="724.4" width="1" height="4.8"/><path d="M19.8,724.4 L16.6,726.8 L19.8,729.2 Z"/><path d="M28.2,724.4 L31.4,726.8 L28.2,729.2 Z"/><path d="M39.4,724.4 L42.6,726.8 L39.4,729.2 Z"/><rect x="42.8" y="724.4" width="1" height="4.8"/></g>
<!-- status icons -->
<path d="M1238,741.6 L1241.6,735 L1245.4,741.6 Z" fill="#f0c428" stroke="#8c6d10" stroke-width="0.7"/><path d="M1243,738 L1246.6,734.6 L1247,737.6" fill="none" stroke="#111" stroke-width="1.3"/><path d="M1237.6,743.4 H1246.6" stroke="#2b5b8a" stroke-width="1.6" stroke-dasharray="1.4 0.6"/>
<path d="M1339.8,741 L1342,738.6 L1344.2,741 Z" fill="#b9b9b9"/>
<path d="M1363.4,738.4 L1368.4,735.6 L1375,739.4 L1373.4,743.4 L1367.4,745 L1363.8,742 Z" fill="#ececec" stroke="#3c3c3c" stroke-width="1"/><path d="M1366,738.6 L1369.4,740.8 L1372.4,738.8" fill="none" stroke="#3c3c3c" stroke-width="0.8"/>
</svg>
<div class="abs" style="left:1375.6px;top:223px;width:1.4px;height:509.6px;background:#3c3c3c"></div>
<!--/BT-->
<div style="position:absolute;left:0;top:0;width:1377px;height:746px;will-change:transform;opacity:0.999">
<!--TEXT-->
<span class="t" style="left:6.4px;top:7.4px;color:#c4232d;font-style:italic;font-size:9px;transform:scaleX(0.911)">DS</span>
<span class="t" style="left:22.5px;top:7.6px;color:#c4232d;font-weight:bold;font-style:italic;font-size:9.4px;transform:scaleX(0.942)">SOLID</span>
<span class="t" style="left:49.5px;top:7.6px;color:#d9595f;font-style:italic;font-size:9.4px;transform:scaleX(0.861)">WORKS</span>
<span class="t" style="left:102.5px;top:7.6px;color:#1e1e1e;transform:scaleX(0.881)">File</span>
<span class="t" style="left:127.0px;top:7.6px;color:#1e1e1e;transform:scaleX(0.923)">Edit</span>
<span class="t" style="left:153.0px;top:7.6px;color:#1e1e1e;transform:scaleX(0.951)">View</span>
<span class="t" style="left:182.0px;top:7.6px;color:#1e1e1e;transform:scaleX(0.954)">Insert</span>
<span class="t" style="left:214.7px;top:7.6px;color:#1e1e1e;transform:scaleX(0.910)">Tools</span>
<span class="t" style="left:245.9px;top:7.6px;color:#1e1e1e;transform:scaleX(0.987)">Window</span>
<span class="t" style="left:824.5px;top:6.8px;color:#1e1e1e;transform:scaleX(0.830)">Planes.SLDPRT *</span>
<span class="t" style="left:1096.8px;top:6.8px;color:#777;transform:scaleX(0.887)">Search Commands</span>
<span class="t" style="left:9.4px;top:43.0px;color:#bdbdbd;transform:scaleX(0.928)">Extruded</span>
<span class="t" style="left:8.0px;top:52.1px;color:#bdbdbd;transform:scaleX(0.844)">Boss/Base</span>
<span class="t" style="left:52.6px;top:43.0px;color:#bdbdbd;transform:scaleX(0.902)">Revolved</span>
<span class="t" style="left:51.5px;top:52.1px;color:#bdbdbd;transform:scaleX(0.832)">Boss/Base</span>
<span class="t" style="left:110.4px;top:29.3px;color:#bdbdbd;transform:scaleX(0.885)">Swept Boss/Base</span>
<span class="t" style="left:110.4px;top:48.0px;color:#bdbdbd;transform:scaleX(0.893)">Lofted Boss/Base</span>
<span class="t" style="left:110.4px;top:66.4px;color:#bdbdbd;transform:scaleX(0.884)">Boundary Boss/Base</span>
<span class="t" style="left:196.6px;top:43.0px;color:#bdbdbd;transform:scaleX(0.928)">Extruded</span>
<span class="t" style="left:206.8px;top:52.1px;color:#bdbdbd;transform:scaleX(0.934)">Cut</span>
<span class="t" style="left:241.4px;top:43.0px;color:#bdbdbd;transform:scaleX(0.895)">Hole</span>
<span class="t" style="left:237.0px;top:52.1px;color:#bdbdbd;transform:scaleX(0.913)">Wizard</span>
<span class="t" style="left:270.0px;top:43.0px;color:#bdbdbd;transform:scaleX(0.883)">Revolved</span>
<span class="t" style="left:280.0px;top:52.1px;color:#bdbdbd;transform:scaleX(0.934)">Cut</span>
<span class="t" style="left:327.0px;top:29.3px;color:#bdbdbd;transform:scaleX(0.911)">Swept Cut</span>
<span class="t" style="left:327.0px;top:48.0px;color:#bdbdbd;transform:scaleX(0.936)">Lofted Cut</span>
<span class="t" style="left:327.0px;top:66.4px;color:#bdbdbd;transform:scaleX(0.911)">Boundary Cut</span>
<span class="t" style="left:389.9px;top:43.0px;color:#bdbdbd;transform:scaleX(0.937)">Fillet</span>
<span class="t" style="left:417.0px;top:43.0px;color:#bdbdbd;transform:scaleX(0.891)">Linear</span>
<span class="t" style="left:414.9px;top:52.1px;color:#bdbdbd;transform:scaleX(0.920)">Pattern</span>
<span class="t" style="left:465.3px;top:29.3px;color:#bdbdbd;transform:scaleX(0.856)">Rib</span>
<span class="t" style="left:465.3px;top:48.0px;color:#bdbdbd;transform:scaleX(0.928)">Draft</span>
<span class="t" style="left:465.3px;top:66.4px;color:#bdbdbd;transform:scaleX(0.895)">Shell</span>
<span class="t" style="left:510.7px;top:29.3px;color:#bdbdbd;transform:scaleX(0.940)">Wrap</span>
<span class="t" style="left:510.7px;top:48.0px;color:#bdbdbd;transform:scaleX(0.927)">Intersect</span>
<span class="t" style="left:510.7px;top:66.4px;color:#bdbdbd;transform:scaleX(0.980)">Mirror</span>
<span class="t" style="left:555.3px;top:43.0px;color:#bdbdbd;transform:scaleX(0.882)">Reference</span>
<span class="t" style="left:556.3px;top:52.1px;color:#bdbdbd;transform:scaleX(0.901)">Geometry</span>
<span class="t" style="left:599.3px;top:43.0px;color:#bdbdbd;transform:scaleX(0.850)">Curves</span>
<span class="t" style="left:633.0px;top:43.0px;color:#111;transform:scaleX(0.929)">Instant3D</span>
<span class="t" style="left:5.8px;top:85.7px;color:#262626;transform:scaleX(0.985)">Features</span>
<span class="t" style="left:53.0px;top:85.7px;color:#262626;transform:scaleX(0.944)">Sketch</span>
<span class="t" style="left:92.0px;top:85.7px;color:#262626;transform:scaleX(0.902)">Surfaces</span>
<span class="t" style="left:134.5px;top:85.7px;color:#262626;transform:scaleX(0.948)">Sheet Metal</span>
<span class="t" style="left:190.9px;top:85.7px;color:#262626;transform:scaleX(0.994)">Mesh Modeling</span>
<span class="t" style="left:261.9px;top:85.7px;color:#262626;transform:scaleX(0.917)">Evaluate</span>
<span class="t" style="left:305.0px;top:85.7px;color:#262626;transform:scaleX(0.958)">MBD Dimensions</span>
<span class="t" style="left:206.7px;top:104.6px;color:#262626;transform:scaleX(0.954)">Planes (Default) &lt;&lt;Defaul...</span>
<span class="t" style="left:23.0px;top:142.5px;color:#2a2a2a;font-weight:bold;transform:scaleX(0.950)">Plane</span>
<span class="t" style="left:5.9px;top:182.7px;color:#333;font-weight:bold;transform:scaleX(0.936)">Message</span>
<span class="t" style="left:5.9px;top:198.7px;color:#123012;transform:scaleX(0.964)">Fully defined</span>
<span class="t" style="left:6.1px;top:218.5px;color:#333;font-weight:bold;transform:scaleX(0.933)">First Reference</span>
<span class="t" style="left:36.0px;top:237.8px;color:#333;transform:scaleX(0.927)">Line3@Sketch2</span>
<span class="t" style="left:26.5px;top:260.6px;color:#555;transform:scaleX(0.949)">Perpendicular</span>
<span class="t" style="left:38.3px;top:280.7px;color:#555;transform:scaleX(0.969)">Set origin on curve</span>
<span class="t" style="left:26.5px;top:299.8px;color:#555;transform:scaleX(0.976)">Coincident</span>
<span class="t" style="left:26.5px;top:319.9px;color:#555;transform:scaleX(0.960)">Project</span>
<span class="t" style="left:6.1px;top:342.6px;color:#333;font-weight:bold;transform:scaleX(0.930)">Second Reference</span>
<span class="t" style="left:36.0px;top:362.0px;color:#333;transform:scaleX(0.932)">Point7@Sketch2</span>
<span class="t" style="left:26.5px;top:384.8px;color:#555;transform:scaleX(0.976)">Coincident</span>
<span class="t" style="left:26.5px;top:404.8px;color:#555;transform:scaleX(0.960)">Project</span>
<span class="t" style="left:28.2px;top:424.2px;color:#aaa;transform:scaleX(0.775)">0</span>
<span class="t" style="left:6.1px;top:447.0px;color:#333;font-weight:bold;transform:scaleX(0.949)">Third Reference</span>
<span class="t" style="left:6.1px;top:491.5px;color:#333;font-weight:bold;transform:scaleX(0.945)">Options</span>
<span class="t" style="left:38.3px;top:508.0px;color:#555;transform:scaleX(0.970)">Flip normal</span>
<span class="t" style="left:56.6px;top:720.7px;color:#111;font-weight:bold;transform:scaleX(0.983)">Model</span>
<span class="t" style="left:96.2px;top:720.7px;color:#2a2a2a;transform:scaleX(0.908)">3D Views</span>
<span class="t" style="left:144.7px;top:720.7px;color:#2a2a2a;transform:scaleX(0.964)">Motion Study 1</span>
<span class="t" style="left:1.2px;top:734.6px;color:#2a2a2a;transform:scaleX(0.852)">SOLIDWORKS</span>
<span class="t" style="left:1058.0px;top:734.6px;color:#1e1e1e;transform:scaleX(0.972)">Normal Distance: 0mm</span>
<span class="t" style="left:1172.5px;top:734.6px;color:#1e1e1e;transform:scaleX(0.963)">Editing Part</span>
<span class="t" style="left:1301.0px;top:734.6px;color:#b4b4b4;transform:scaleX(0.950)">MMGS</span>
<span class="t" style="left:199.6px;top:652.7px;color:#2a5a2a;font-size:7.8px;transform:scaleX(1.038)">Y</span>
<span class="t" style="left:183.7px;top:662.8px;color:#22224f;font-size:7.8px;transform:scaleX(0.755)">Z</span>
<span class="t" style="left:184.0px;top:684.2px;color:#8a3030;font-size:7.8px;transform:scaleX(0.807)">X</span>
<!--/TEXT-->
</div>
</body>
</html>
